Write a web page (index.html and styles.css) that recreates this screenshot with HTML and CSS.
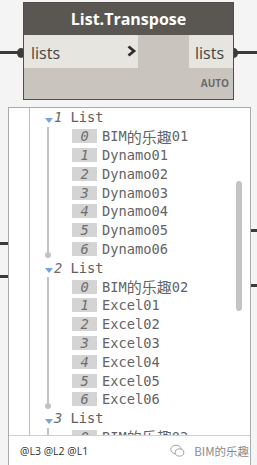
FILE: index.html
```html
<!DOCTYPE html>
<html lang="zh">
<head>
    <meta charset="UTF-8">
    <meta name="viewport" content="width=device-width, initial-scale=1.0">
    <title>List.Transpose</title>
    <link rel="stylesheet" href="styles.css">
</head>
<body>
<div class="canvas">
    <div class="wire wire-in"></div>
    <div class="wire wire-out"></div>
    <div class="wire wire-a"></div>
    <div class="wire wire-b"></div>
    <div class="wire wire-c"></div>
    <div class="wire wire-d"></div>

    <div class="node">
        <div class="node-title">List.Transpose</div>
        <div class="ports">
            <div class="port in">
                <span>lists</span>
                <svg class="chev" width="11" height="12" viewBox="0 0 11 12"><polyline points="2.5,1.5 8,6 2.5,10.5" fill="none" stroke="#2e2e2e" stroke-width="2.8"/></svg>
            </div>
            <div class="port out">lists</div>
        </div>
        <div class="node-foot">AUTO</div>
    </div>

    <div class="watch">
        <div class="tree">
            <div class="root">
                <div class="group">
                    <div class="head"><i class="tri"></i><em>1</em> List</div>
                    <div class="items">
                        <div class="row"><span class="idx">0</span>BIM<span class="cn">的乐趣</span>01</div>
                        <div class="row"><span class="idx">1</span>Dynamo01</div>
                        <div class="row"><span class="idx">2</span>Dynamo02</div>
                        <div class="row"><span class="idx">3</span>Dynamo03</div>
                        <div class="row"><span class="idx">4</span>Dynamo04</div>
                        <div class="row"><span class="idx">5</span>Dynamo05</div>
                        <div class="row"><span class="idx">6</span>Dynamo06</div>
                    </div>
                </div>
                <div class="group">
                    <div class="head"><i class="tri"></i><em>2</em> List</div>
                    <div class="items">
                        <div class="row"><span class="idx">0</span>BIM<span class="cn">的乐趣</span>02</div>
                        <div class="row"><span class="idx">1</span>Excel01</div>
                        <div class="row"><span class="idx">2</span>Excel02</div>
                        <div class="row"><span class="idx">3</span>Excel03</div>
                        <div class="row"><span class="idx">4</span>Excel04</div>
                        <div class="row"><span class="idx">5</span>Excel05</div>
                        <div class="row"><span class="idx">6</span>Excel06</div>
                    </div>
                </div>
                <div class="group">
                    <div class="head"><i class="tri"></i><em>3</em> List</div>
                    <div class="items">
                        <div class="row"><span class="idx">0</span>BIM<span class="cn">的乐趣</span>03</div>
                    </div>
                </div>
            </div>
            <div class="scroll"></div>
        </div>
        <div class="watch-foot">
            <div class="levels">@L3 @L2 @L1</div>
            <div class="mark">
                <svg width="15" height="14" viewBox="0 0 15 14">
                    <ellipse cx="6" cy="5.5" rx="5.2" ry="4.3" fill="none" stroke="#9a9a9a" stroke-width="0.9"/>
                    <ellipse cx="9.5" cy="8.5" rx="4.3" ry="3.6" fill="#fff" stroke="#9a9a9a" stroke-width="0.9"/>
                </svg>
                <span>BIM的乐趣</span>
            </div>
        </div>
    </div>
</div>
</body>
</html>
```

FILE: styles.css
```css
* {
    box-sizing: border-box;
}

body {
    margin: 0;
    background: #f4f4f4;
    font-family: "Open Sans", sans-serif;
}

.canvas {
    position: relative;
    width: 257px;
    height: 465px;
    overflow: hidden;
    padding-top: 2px;
}

/* wires on the canvas */
.wire {
    position: absolute;
    height: 3px;
    background: #3b3b3b;
}
.wire-in { left: 0; top: 51px; width: 22px; }
.wire-out { left: 234px; top: 51px; width: 23px; }
.wire-in::after, .wire-out::after {
    content: '';
    position: absolute;
    top: -3.5px;
    width: 8px;
    height: 10px;
    border-radius: 50%;
    background: #3b3b3b;
}
.wire-in::after { right: -3px; }
.wire-out::after { left: -4px; }
.wire-a { left: 0; top: 242px; width: 10px; }
.wire-b { left: 0; top: 275px; width: 10px; }
.wire-c { left: 248px; top: 229px; width: 9px; }
.wire-d { left: 248px; top: 284px; width: 9px; }

/* node */
.node {
    position: relative;
    z-index: 1;
    width: 211px;
    margin-left: 23px;
    border: 1px solid #4f4c49;
    background: #c9c5be;
}
.node-title {
    height: 32px;
    padding-top: 1px;
    background: #5a5753;
    color: #fff;
    font-weight: 700;
    font-size: 16px;
    line-height: 31px;
    text-align: center;
}
.ports {
    display: flex;
    justify-content: space-between;
    height: 33px;
}
.port {
    display: flex;
    align-items: center;
    padding-top: 3px;
    background: #e7e5e0;
    color: #454545;
    font-size: 16px;
}
.port.in {
    width: 114px;
    padding-left: 7px;
    padding-right: 1px;
    justify-content: space-between;
}
.port.in .chev {
    margin-top: -4px;
}
.port.out {
    width: 44px;
    padding-left: 6px;
}
.node-foot {
    height: 31px;
    padding-right: 4px;
    text-align: right;
    font-size: 10px;
    font-weight: 700;
    color: #6a6a6a;
    line-height: 31px;
}

/* watch panel */
.watch {
    position: relative;
    z-index: 1;
    width: 243px;
    margin: 7px 0 0 8px;
    border: 1px solid #ababab;
    background: #fff;
}
.tree {
    position: relative;
    height: 327px;
    overflow: hidden;
    font-family: "DejaVu Sans Mono", "Noto Sans CJK SC", monospace;
    font-size: 13.7px;
    color: #646464;
}
.root {
    min-height: 100%;
    margin-left: 20px;
    border-left: 1px solid #bdbdbd;
}
.head {
    display: flex;
    align-items: center;
    height: 18.8px;
    padding-left: 15px;
    white-space: pre;
    color: #5e5e5e;
}
.head em {
    color: #6a6a6a;
}
.tri {
    width: 0;
    height: 0;
    margin-top: 6px;
    margin-right: 1px;
    border-left: 4.5px solid transparent;
    border-right: 4.5px solid transparent;
    border-top: 5px solid #76a5d8;
}
.items {
    position: relative;
    margin-left: 17px;
    border-left: 2px solid #c3c3c3;
}
.items::after {
    content: '';
    position: absolute;
    left: -4px;
    bottom: 0;
    width: 6px;
    height: 6px;
    border-radius: 50%;
    background: #c3c3c3;
}
.row {
    display: flex;
    align-items: center;
    height: 18.8px;
    padding-left: 23px;
    white-space: nowrap;
}
.idx {
    width: 25px;
    height: 14px;
    margin-right: 5px;
    background: #d4d4d4;
    color: #6e6e6e;
    font-style: italic;
    line-height: 14px;
    text-align: center;
}
.cn {
    font-size: 15px;
}
.scroll {
    position: absolute;
    left: 227px;
    top: 73px;
    width: 6px;
    height: 130px;
    border-radius: 3px;
    background: #c4c4c4;
}

.watch-foot {
    display: flex;
    align-items: center;
    justify-content: space-between;
    height: 31px;
    padding: 0 1px 0 11px;
    border-top: 1px solid #cfcfcf;
}
.levels {
    font-size: 10.5px;
    color: #2f2f2f;
}
.mark {
    display: flex;
    align-items: center;
    gap: 9px;
    font-family: "Noto Sans CJK SC", sans-serif;
    font-size: 11.5px;
    color: #8a8a8a;
}
```
